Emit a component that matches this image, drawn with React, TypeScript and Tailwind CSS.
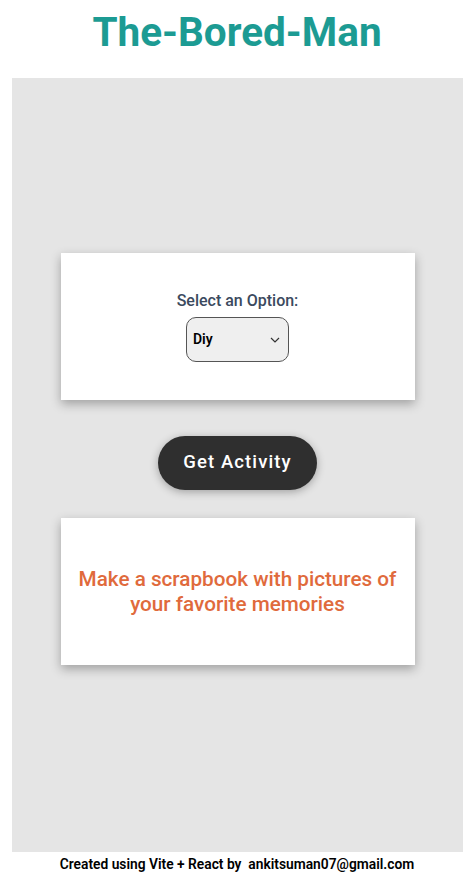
import React from 'react';

export default function App() {
  return (
    <div className="w-[474px] min-h-[889px] bg-white flex flex-col font-['Roboto',sans-serif]">
      <header className="h-[78px] flex items-center justify-center pb-[14px]">
        <h1 className="text-[40.5px] font-bold text-[#1c9b93] leading-none">The-Bored-Man</h1>
      </header>

      <main className="mx-[12px] w-[451px] h-[774px] bg-[#e5e5e5] flex flex-col items-center pt-[175px]">
        <div className="w-[354px] h-[147px] bg-white shadow-[0_4px_10px_rgba(0,0,0,0.3)] flex flex-col items-center pt-[38px]">
          <label className="text-[16px] font-medium text-[#3b4a5e] leading-5">Select an Option:</label>
          <div className="mt-[6px] w-[103px] h-[45px] rounded-[10px] border border-[#555] bg-[#efefef] flex items-center justify-between pl-[6px] pr-[8px]">
            <span className="text-[14px] font-semibold text-black">Diy</span>
            <svg width="10" height="6" viewBox="0 0 10 6" fill="none">
              <path d="M1 1l4 4 4-4" stroke="#333" strokeWidth="1.2" />
            </svg>
          </div>
        </div>

        <button className="mt-[36px] w-[159px] h-[54px] rounded-full bg-[#2f2f2f] text-white text-[18.5px] font-medium tracking-[1.1px] shadow-[0_2px_8px_rgba(0,0,0,0.3)]">
          Get Activity
        </button>

        <div className="mt-[28px] w-[354px] h-[147px] bg-white shadow-[0_4px_10px_rgba(0,0,0,0.3)] flex items-center justify-center px-2">
          <p className="text-[20.7px] font-medium text-[#e06a3c] text-center leading-[25px]">
            Make a scrapbook with pictures of your favorite memories
          </p>
        </div>
      </main>

      <footer className="flex justify-center pt-[2px]">
        <p className="text-[13.8px] font-semibold text-black">Created using Vite + React by&nbsp; ankitsuman07@gmail.com</p>
      </footer>
    </div>
  );
}
